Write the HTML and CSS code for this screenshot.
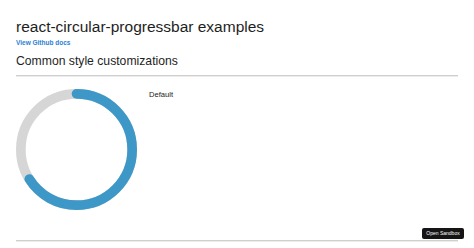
FILE: index.html
```html
<!DOCTYPE html>
<html>
<head>
<meta charset="utf-8">
<link rel="stylesheet" href="styles.css">
</head>
<body>
<div class="page">
  <h1 class="title">react-circular-progressbar examples</h1>
  <a class="docs" href="#">View Github docs</a>
  <h2 class="subtitle">Common style customizations</h2>
  <hr class="rule">
  <div class="example">
    <div class="progress">
      <svg class="ring" viewBox="0 0 100 100">
        <path class="trail" d="M 50,50 m 0,-46 a 46,46 0 1 1 0,92 a 46,46 0 1 1 0,-92"></path>
        <path class="path" d="M 50,50 m 0,-46 a 46,46 0 1 1 0,92 a 46,46 0 1 1 0,-92" style="stroke-dasharray: 289.03px, 289.03px; stroke-dashoffset: 98.27px;"></path>
      </svg>
    </div>
    <div class="label">Default</div>
  </div>
  <hr class="rule bottom">
</div>
<a class="sandbox" href="#">Open Sandbox</a>
</body>
</html>
```

FILE: styles.css
```css
html, body {
  margin: 0;
  padding: 0;
  background: #fff;
}
body {
  font-family: "Liberation Sans", Arial, sans-serif;
  color: #222;
}
.page {
  padding: 18px 16px 0 16px;
}
.title {
  margin: 0;
  font-size: 15.5px;
  line-height: 18px;
  font-weight: normal;
  color: #1e1e1e;
}
.docs {
  display: block;
  margin-top: 2.5px;
  font-size: 6.5px;
  line-height: 8px;
  font-weight: bold;
  color: #2b80d6;
  text-decoration: none;
}
.subtitle {
  margin: 7.5px 0 0 0;
  font-size: 12.2px;
  line-height: 14px;
  font-weight: normal;
  color: #1e1e1e;
}
.rule {
  margin: 7px 0 0 0;
  border: 0;
  height: 0;
  border-top: 1px solid #cfcfcf;
  border-bottom: 1px solid #ececec;
}
.rule.bottom {
  margin-top: 30px;
}
.example {
  display: flex;
  align-items: flex-start;
  gap: 12px;
  margin-top: 12px;
}
.progress {
  width: 121px;
  height: 121px;
  flex: none;
}
.ring {
  display: block;
  width: 121px;
  height: 121px;
}
.trail {
  fill: none;
  stroke: #d6d6d6;
  stroke-width: 8;
  stroke-linecap: round;
}
.path {
  fill: none;
  stroke: #3e98c7;
  stroke-width: 8;
  stroke-linecap: round;
}
.label {
  margin-top: 1px;
  font-size: 7.6px;
  line-height: 9px;
  color: #222;
}
.sandbox {
  position: fixed;
  right: 10px;
  bottom: 9px;
  width: 42px;
  height: 11px;
  box-sizing: border-box;
  background: #151515;
  color: #fff;
  border-radius: 2px;
  font-size: 5px;
  line-height: 11px;
  text-align: center;
  text-decoration: none;
  white-space: nowrap;
}
```
